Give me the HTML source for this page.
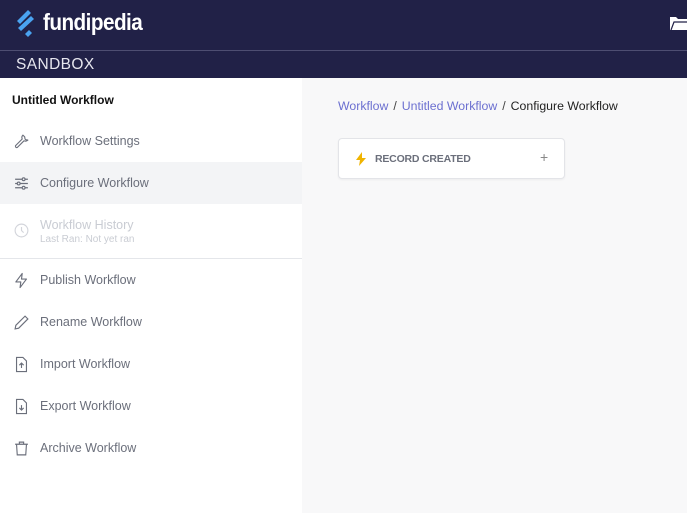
<!DOCTYPE html>
<html><head><style>
*{margin:0;padding:0;box-sizing:border-box}
body{width:687px;height:513px;overflow:hidden;font-family:"Liberation Sans",sans-serif;background:#f8f8f9;position:relative}
.hdr{position:absolute;left:0;top:0;width:687px;height:78px;background:#212147}
.line{position:absolute;left:0;top:50px;width:687px;height:1px;background:#4e4e72}
.logo{position:absolute;left:43px;top:9px;color:#fff;font-size:23px;font-weight:bold;letter-spacing:-0.6px;transform:scaleX(0.9);transform-origin:left}
.sb{position:absolute;left:16px;top:56px;color:#e6e6ee;font-size:15.5px;letter-spacing:0.4px}
.side{position:absolute;left:0;top:78px;width:302px;height:435px;background:#fff}
.title{position:absolute;left:12px;top:15px;font-size:12px;font-weight:bold;color:#111}
.item{position:absolute;left:0;width:302px;height:42px;font-size:12.5px;color:#6b6f7b}
.item span{position:absolute;left:40px;top:14px}
.item svg{position:absolute;left:13px;top:13px}
.act{background:#f3f4f6}
.dis{color:#c9ccd3}
.sep{position:absolute;left:0;top:180px;width:302px;height:1px;background:#e4e6ea}
.bc{position:absolute;left:338px;top:99px;font-size:12.3px;color:#6b6fd0}
.bc b{font-weight:normal;color:#222;}
.bc i{font-style:normal;color:#444;margin:0 5px}
.card{position:absolute;left:338px;top:138px;width:227px;height:41px;background:#fff;border:1px solid #e3e4e8;border-radius:4px;box-shadow:0 1px 2px rgba(0,0,0,.05)}
.card .t{position:absolute;left:36px;top:14px;font-size:10.5px;font-weight:bold;color:#6b6f7b;letter-spacing:-0.2px}
.card .p{position:absolute;left:201px;top:10px;font-size:14px;color:#888}
</style></head><body>
<div class="hdr">
<svg style="position:absolute;left:16px;top:9px" width="22" height="30" viewBox="0 0 22 30"><g fill="#4aa3f0"><path d="M1 12 L12 1 L15 4 L4 15Z"/><path d="M2 19 L15 7 L18 10 L5 22Z"/><path d="M9 25 L13 21 L16 24 L12 28Z"/></g></svg>
<div class="logo">fundipedia</div>
<div class="line"></div>
<div class="sb">SANDBOX</div>
<svg style="position:absolute;left:670px;top:16px" width="20" height="16" viewBox="0 0 20 16"><path d="M0 1h6l2 2h12v11H0z" fill="#fff"/><path d="M1 14l3-8h16" stroke="#212147" stroke-width="1.2" fill="none"/></svg>
</div>
<div class="side">
<div class="title">Untitled Workflow</div>
<div class="item" style="top:42px"><svg width="17" height="17" viewBox="0 0 24 24" fill="none" stroke="#6b6f7b" stroke-width="1.6" stroke-linejoin="round"><path d="M14 3a5 5 0 0 0-1 5.5L3.5 18a2 2 0 0 0 2.5 2.5L15.5 11A5 5 0 0 0 21 10l-3-.5-1-1-.5-3z"/></svg><span>Workflow Settings</span></div>
<div class="item act" style="top:84px"><svg width="17" height="17" viewBox="0 0 24 24" fill="none" stroke="#6b6f7b" stroke-width="1.6"><path d="M3 6h18M3 12h18M3 18h18"/><circle cx="15" cy="6" r="2" fill="#f3f4f6"/><circle cx="8" cy="12" r="2" fill="#f3f4f6"/><circle cx="15" cy="18" r="2" fill="#f3f4f6"/></svg><span>Configure Workflow</span></div>
<div class="item dis" style="top:126px;height:54px"><svg width="17" height="17" viewBox="0 0 24 24" fill="none" stroke="#d3d5db" stroke-width="1.6" style="top:18px"><circle cx="12" cy="12" r="9"/><path d="M12 7v5l3 3"/></svg><span style="top:14px">Workflow History</span><span style="top:30px;font-size:10px">Last Ran: Not yet ran</span></div>
<div class="sep"></div>
<div class="item" style="top:181px"><svg width="17" height="17" viewBox="0 0 24 24" fill="none" stroke="#6b6f7b" stroke-width="1.6" stroke-linejoin="round"><path d="M13 2L4 14h7l-1 8 9-12h-7z"/></svg><span>Publish Workflow</span></div>
<div class="item" style="top:223px"><svg width="17" height="17" viewBox="0 0 24 24" fill="none" stroke="#6b6f7b" stroke-width="1.6"><path d="M17 3l4 4L8 20l-5 1 1-5z"/></svg><span>Rename Workflow</span></div>
<div class="item" style="top:265px"><svg width="17" height="17" viewBox="0 0 24 24" fill="none" stroke="#6b6f7b" stroke-width="1.6"><path d="M5 2h9l5 5v15H5z"/><path d="M12 17v-7M9 13l3-3 3 3"/></svg><span>Import Workflow</span></div>
<div class="item" style="top:307px"><svg width="17" height="17" viewBox="0 0 24 24" fill="none" stroke="#6b6f7b" stroke-width="1.6"><path d="M5 2h9l5 5v15H5z"/><path d="M12 10v7M9 14l3 3 3-3"/></svg><span>Export Workflow</span></div>
<div class="item" style="top:349px"><svg width="17" height="17" viewBox="0 0 24 24" fill="none" stroke="#6b6f7b" stroke-width="1.6"><path d="M3 6h18M9 6V3h6v3M5 6l1 15h12l1-15"/></svg><span>Archive Workflow</span></div>
</div>
<div class="bc">Workflow<i>/</i>Untitled Workflow<i>/</i><b>Configure Workflow</b></div>
<div class="card"><svg style="position:absolute;left:16px;top:13px" width="12" height="14" viewBox="0 0 12 14"><path d="M7 0L1 8h4l-1 6 7-8H7z" fill="#f0b400"/></svg><div class="t">RECORD CREATED</div><div class="p">+</div></div>
</body></html>
